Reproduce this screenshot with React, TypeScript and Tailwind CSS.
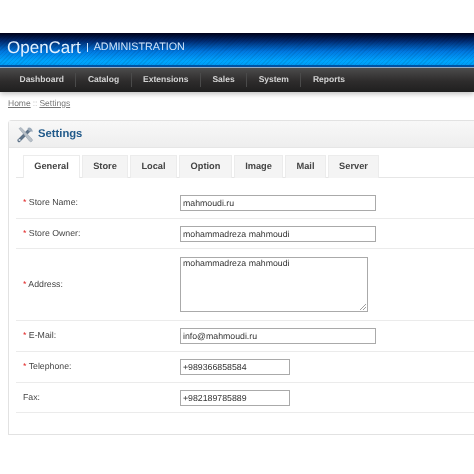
const rows = [
  { label: "Store Name:", req: true, value: "mahmoudi.ru", w: "w-[196px]", cls: "h-[32px] pt-[8px]" },
  { label: "Store Owner:", req: true, value: "mohammadreza mahmoudi", w: "w-[196px]", cls: "h-[30px] pt-[7px]" },
  { label: "E-Mail:", req: true, value: "info@mahmoudi.ru", w: "w-[196px]", cls: "h-[31px] pt-[7px]" },
  { label: "Telephone:", req: true, value: "+989366858584", w: "w-[110px]", cls: "h-[31px] pt-[7px]" },
  { label: "Fax:", req: false, value: "+982189785889", w: "w-[110px]", cls: "h-[30px] pt-[7px]" },
];

const nav = ["Dashboard", "Catalog", "Extensions", "Sales", "System", "Reports"];

const tabs = [
  ["General", "w-[57px]"],
  ["Store", "w-[46px]"],
  ["Local", "w-[47px]"],
  ["Option", "w-[53px]"],
  ["Image", "w-[49px]"],
  ["Mail", "w-[41px]"],
  ["Server", "w-[51px]"],
];

function Label({ text, req }: { text: string; req: boolean }) {
  return (
    <div className="w-[157px] text-[8.75px] leading-[15px] text-[#444]">
      {req && <span className="text-[#e02020]">* </span>}
      {text}
    </div>
  );
}

function Field({ value, w }: { value: string; w: string }) {
  return (
    <div className={`${w} h-[16px] border border-[#aaaaaa] bg-white pl-[2px] text-[8.75px] leading-[14px] text-[#333]`}>
      {value}
    </div>
  );
}

function Row({ r }: { r: (typeof rows)[number] }) {
  return (
    <div className={`flex ${r.cls} items-start border-b border-[#ebebeb] pl-[7px]`}>
      <Label text={r.label} req={r.req} />
      <Field value={r.value} w={r.w} />
    </div>
  );
}

export default function App() {
  return (
    <div className="h-[474px] w-[474px] overflow-hidden bg-white font-['Liberation_Sans',Arial,sans-serif] [text-rendering:geometricPrecision] blur-[0.3px]">
      <div className="h-[33px]" />
      <header className="flex h-[32px] items-center bg-[repeating-linear-gradient(135deg,rgba(0,0,0,0.08)_0px,rgba(0,0,0,0.08)_1px,transparent_1px,transparent_3px),linear-gradient(to_bottom,#000018_0%,#002a70_25%,#0078e0_58%,#00a6ff_88%,#009cf4_100%)] pb-[3px] pl-[7px]">
        <span className="text-[17px] leading-none text-[#e4f2ff]">OpenCart</span>
        <span className="ml-[6px] h-[9px] w-px bg-[#cfe6ff]" />
        <span className="ml-[6px] text-[10.75px] leading-none text-[#cfe4fb]">ADMINISTRATION</span>
      </header>
      <div className="h-[2px] bg-[#0054a8]" />
      <div className="h-px bg-[#9db4cc]" />
      <nav className="flex h-[24px] items-center bg-[linear-gradient(to_bottom,#4c4c4c,#2e2c2c_55%,#1f1f1f)] pb-[1px] pl-[8px] shadow-[0_2px_5px_rgba(0,0,0,0.25)]">
        {nav.map((n, i) => (
          <div
            key={n}
            className={`flex h-[14px] shrink-0 items-center px-[11.5px] ${i < nav.length - 1 ? "border-r border-[#4a4a4a]" : ""} text-[8.5px] font-bold text-[#d4d4d4]`}
          >
            {n}
          </div>
        ))}
      </nav>
      <div className="flex h-[28px] items-center pb-[6px] pl-[8px] text-[8.5px] text-[#777]">
        <span className="underline">Home</span>
        <span className="mx-[2px] text-[#bbb]">::</span>
        <span className="underline">Settings</span>
      </div>
      <main className="ml-[8px] h-[315px] rounded-tl-[4px] border-t border-b border-l border-[#e2e2e2]">
        <div className="flex h-[27px] items-center gap-[3px] border-b border-[#e6e6e6] bg-[linear-gradient(to_bottom,#f8f8f8,#eeeeee)] pl-[7px] pt-[1px]">
          <svg width="19" height="19" viewBox="0 0 19 19">
            <path d="M3 15.5 L13.5 5" stroke="#5f7388" strokeWidth="3.2" strokeLinecap="round" />
            <path d="M11.5 3 a3.6 3.6 0 0 1 5 4.2 l-2.2-1.4 -1.3 1 z" fill="#9aa9b8" />
            <path d="M3 3.5 L5 2.5 L16 14 a1.6 1.6 0 0 1 -2.4 2.2 Z" fill="#b8c0c8" stroke="#939eaa" strokeWidth="0.5" />
            <circle cx="3.6" cy="15" r="1.1" fill="#dfe6ec" />
          </svg>
          <span className="text-[11.25px] font-bold text-[#215a8a]">Settings</span>
        </div>
        <div className="pl-[7px] pt-[7px]">
          <div className="flex h-[23px] gap-[2px] border-b border-[#e6e6e6] pl-[7px]">
            {tabs.map(([t, w], i) => (
              <div
                key={t}
                className={`${w} flex h-[23px] shrink-0 items-center justify-center border-x border-t border-[#ececec] text-[9.25px] font-bold text-[#444] ${i === 0 ? "bg-white" : "bg-[#f4f4f4]"}`}
              >
                {t}
              </div>
            ))}
          </div>
          <div className="pt-[9px]">
            <Row r={rows[0]} />
            <Row r={rows[1]} />
            <div className="flex h-[72px] items-center border-b border-[#ebebeb] pl-[7px]">
              <Label text="Address:" req />
              <div className="relative h-[55px] w-[188px] border border-[#aaaaaa] bg-white pl-[2px] text-[8.75px] leading-[11px] text-[#333]">
                mohammadreza mahmoudi
                <svg className="absolute bottom-0 right-0" width="8" height="8" viewBox="0 0 8 8">
                  <path d="M1 7 L7 1 M4 7 L7 4" stroke="#888" strokeWidth="0.8" />
                </svg>
              </div>
            </div>
            <Row r={rows[2]} />
            <Row r={rows[3]} />
            <Row r={rows[4]} />
          </div>
        </div>
      </main>
    </div>
  );
}
